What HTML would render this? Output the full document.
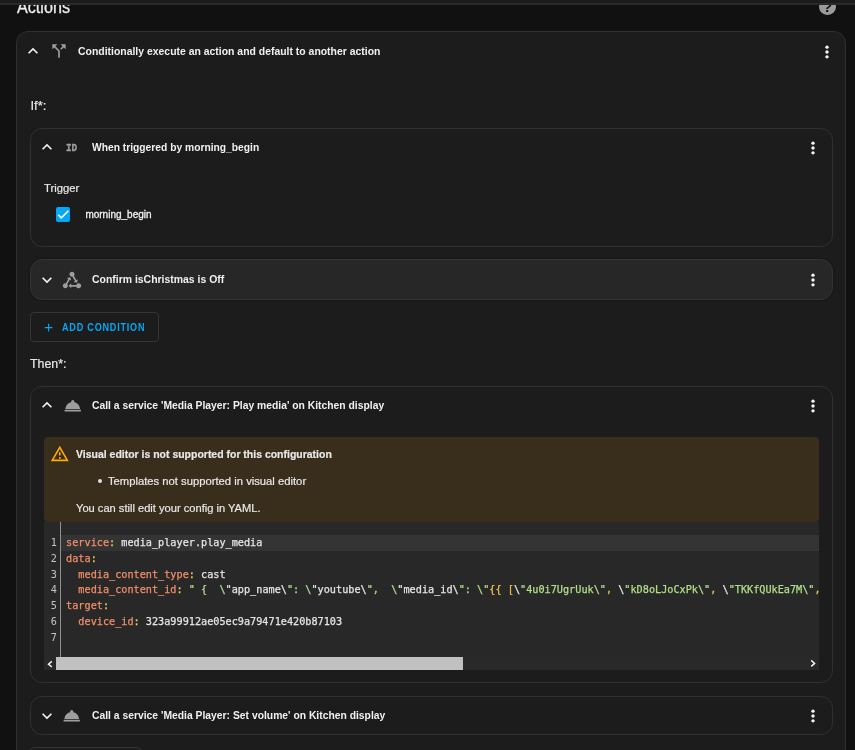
<!DOCTYPE html>
<html lang="en">
<head>
<meta charset="utf-8">
<title>Actions</title>
<style>
*{box-sizing:border-box;margin:0;padding:0}
html,body{width:855px;height:750px;overflow:hidden;background:#111111}
body{position:relative;font-family:"Liberation Sans",Arial,sans-serif;color:#e1e1e1}
.topbar{position:absolute;left:0;top:0;width:855px;height:5px;background:#1c1c1c;border-bottom:2px solid #2a2a2a;z-index:5}
.clip{position:absolute;left:0;top:5px;width:855px;height:745px;overflow:hidden}
.page{position:absolute;left:0;top:-5px;width:855px;height:750px;will-change:transform}
.h1{position:absolute;font-size:17.5px;line-height:20px;color:#ececec;white-space:nowrap;-webkit-text-stroke:.3px}
.help{position:absolute;width:16.6px;height:16.6px;border-radius:50%;background:#9b9b9b}
.help span{position:absolute;left:0;top:.5px;width:16.6px;color:#111;font-weight:bold;font-size:15.5px;line-height:16.6px;text-align:center}
.card{position:absolute;background:#1c1c1c;border:1px solid #303030;border-radius:12px}
.card.hov{background:#272727;border-color:#333}
.title{position:absolute;font-weight:bold;line-height:16px;white-space:nowrap;color:#f0f0f0}
.lbl{position:absolute;line-height:16px;white-space:nowrap;color:#e8e8e8;-webkit-text-stroke:.2px}
.sx{display:inline-block;transform-origin:0 50%;white-space:nowrap}
svg{position:absolute;display:block;overflow:visible}
.ic{fill:#9e9e9e}
.wh{fill:#f4f4f4}
.or{fill:#ffab00}
.bl{fill:#03a9f4}
.idic{position:absolute;font-family:"Liberation Mono",monospace;font-weight:bold;color:#9e9e9e;white-space:nowrap;line-height:16px}
.btn{position:absolute;border:1px solid #353535;border-radius:4px}
.btnt{position:absolute;color:#03a9f4;font-weight:bold;white-space:nowrap;line-height:16px}
.chk{position:absolute;border-radius:2px;background:#03a9f4}
.alert{position:absolute;background:#392e1c;border-radius:4px}
.code{position:absolute;background:#282828;overflow:hidden}
.code pre{position:absolute;font-family:"DejaVu Sans Mono","Liberation Mono",monospace;font-size:10.2px;line-height:16px;white-space:pre;color:#e4e4e4;-webkit-text-stroke:.25px}
.code .ln{color:#c4c4c4;text-align:right;-webkit-text-stroke:0}
.k{color:#f08d68}.s{color:#b3de8a}.p{color:#e8d25a}.b{color:#f0c050}
</style>
</head>
<body>
<div class="topbar"></div>
<div class="clip"><div class="page">

<div class="h1" style="left:17px;top:-3.4px"><span class="sx" style="transform:scaleX(.923)">Actions</span></div>
<div class="help" style="left:819.1px;top:-2px"><span>?</span></div>
<div class="card" style="left:16px;top:31px;width:830px;height:800px"></div>
<svg class="wh" style="left:23px;top:41.3px" width="20" height="20" viewBox="0 0 24 24"><path d="M7.41,15.41L12,10.83L16.59,15.41L18,14L12,8L6,14L7.41,15.41Z"/></svg>
<svg class="ic" style="left:48.7px;top:41.3px" width="20" height="20" viewBox="0 0 24 24"><path d="M14,4L16.29,6.29L13.41,9.17L14.83,10.59L17.71,7.71L20,10V4M10,4H4V10L6.29,7.71L11,12.41V20H13V11.59L7.71,6.29"/></svg>
<div class="title" style="left:78px;top:43.08px;font-size:11.3px"><span class="sx" style="transform:scaleX(0.923)">Conditionally execute an action and default to another action</span></div>
<svg class="wh" style="left:822.8px;top:42.65px" width="8" height="18" viewBox="0 0 8 18"><circle cx="4" cy="4.15" r="1.7"/><circle cx="4" cy="9" r="1.7"/><circle cx="4" cy="13.85" r="1.7"/></svg>
<div class="lbl" style="left:30.5px;top:97.90px;font-size:13px;"><span class="sx" style="transform:scaleX(1)">If*:</span></div>
<div class="card" style="left:30px;top:128px;width:803px;height:119px"></div>
<svg class="wh" style="left:37.2px;top:137.3px" width="20" height="20" viewBox="0 0 24 24"><path d="M7.41,15.41L12,10.83L16.59,15.41L18,14L12,8L6,14L7.41,15.41Z"/></svg>
<div class="idic" style="left:66.3px;top:139.9px;font-size:10.8px;-webkit-text-stroke:.35px"><span class="sx" style="transform:scaleX(.86)">ID</span></div>
<div class="title" style="left:91.85px;top:139.28px;font-size:11.3px"><span class="sx" style="transform:scaleX(0.909)">When triggered by morning_begin</span></div>
<svg class="wh" style="left:808.8px;top:139.15px" width="8" height="18" viewBox="0 0 8 18"><circle cx="4" cy="4.15" r="1.7"/><circle cx="4" cy="9" r="1.7"/><circle cx="4" cy="13.85" r="1.7"/></svg>
<div class="lbl" style="left:44px;top:179.58px;font-size:11.3px;"><span class="sx" style="transform:scaleX(1)">Trigger</span></div>
<div class="chk" style="left:55.8px;top:207.3px;width:14.4px;height:14.4px"><svg style="left:0;top:0" width="14.4" height="14.4" viewBox="0 0 24 24"><path d="M1.73,12.91 8.1,19.28 22.79,4.59" fill="none" stroke="#fff" stroke-width="3.12" transform="translate(2.3 2.5) scale(.81)"/></svg></div>
<div class="lbl" style="left:85.4px;top:207.23px;font-size:10px;-webkit-text-stroke:.3px;color:#f0f0f0"><span class="sx" style="transform:scaleX(1)">morning_begin</span></div>
<div class="card hov" style="left:30px;top:259.3px;width:803px;height:40.3px;box-shadow:0 0 2px rgba(0,0,0,.5)"></div>
<svg class="wh" style="left:37.3px;top:269.9px" width="20" height="20" viewBox="0 0 24 24"><path d="M7.41,8.58L12,13.17L16.59,8.58L18,10L12,16L6,10L7.41,8.58Z"/></svg>
<svg class="ic" style="left:62.2px;top:269.9px" width="20" height="20" viewBox="0 0 24 24"><path d="M6.27 17.05C6.72 17.58 7 18.25 7 19C7 20.66 5.66 22 4 22S1 20.66 1 19 2.34 16 4 16C4.18 16 4.36 16 4.53 16.05L7.6 10.69L5.86 9.7L9.95 8.58L11.07 12.67L9.33 11.68L6.27 17.05M20 16C18.7 16 17.6 16.84 17.18 18H11V16L8 19L11 22V20H17.18C17.6 21.16 18.7 22 20 22C21.66 22 23 20.66 23 19S21.66 16 20 16M12 8C12.18 8 12.36 8 12.53 7.95L15.6 13.31L13.86 14.3L17.95 15.42L19.07 11.33L17.33 12.32L14.27 6.95C14.72 6.42 15 5.75 15 5C15 3.34 13.66 2 12 2S9 3.34 9 5 10.34 8 12 8Z"/></svg>
<div class="title" style="left:91.85px;top:270.88px;font-size:11.3px"><span class="sx" style="transform:scaleX(0.924)">Confirm isChristmas is Off</span></div>
<svg class="wh" style="left:808.8px;top:271.25px" width="8" height="18" viewBox="0 0 8 18"><circle cx="4" cy="4.15" r="1.7"/><circle cx="4" cy="9" r="1.7"/><circle cx="4" cy="13.85" r="1.7"/></svg>
<div class="btn" style="left:30px;top:312px;width:129px;height:29.5px"></div>
<svg class="bl" style="left:42.4px;top:320.6px" width="13.2" height="13.2" viewBox="0 0 24 24"><path d="M19,13H13V19H11V13H5V11H11V5H13V11H19V13Z"/></svg>
<div class="btnt" style="left:61.9px;top:319.5px;font-size:10.3px;letter-spacing:.9px"><span class="sx" style="transform:scaleX(.88)">ADD CONDITION</span></div>
<div class="lbl" style="left:30.2px;top:356.40px;font-size:13px;"><span class="sx" style="transform:scaleX(0.95)">Then*:</span></div>
<div class="card" style="left:30px;top:386px;width:803px;height:296.8px"></div>
<svg class="wh" style="left:36.8px;top:394.9px" width="20" height="20" viewBox="0 0 24 24"><path d="M7.41,15.41L12,10.83L16.59,15.41L18,14L12,8L6,14L7.41,15.41Z"/></svg>
<svg class="ic" style="left:62.5px;top:395.7px" width="19.5" height="19.5" viewBox="0 0 24 24"><path d="M2,17H22V19H2M13.84,7.79C13.94,7.55 14,7.28 14,7A2,2 0 0,0 12,5A2,2 0 0,0 10,7C10,7.28 10.06,7.55 10.16,7.79C6.25,8.6 3.27,11.93 3,16H21C20.73,11.93 17.75,8.6 13.84,7.79Z"/></svg>
<div class="title" style="left:91.85px;top:396.98px;font-size:11.3px"><span class="sx" style="transform:scaleX(0.915)">Call a service 'Media Player: Play media' on Kitchen display</span></div>
<svg class="wh" style="left:808.8px;top:396.85px" width="8" height="18" viewBox="0 0 8 18"><circle cx="4" cy="4.15" r="1.7"/><circle cx="4" cy="9" r="1.7"/><circle cx="4" cy="13.85" r="1.7"/></svg>
<div class="alert" style="left:44px;top:437px;width:775.3px;height:85px"></div>
<svg class="or" style="left:49.9px;top:444.1px" width="19.6" height="19.6" viewBox="0 0 24 24"><path d="M12,2L1,21H23M12,6L19.53,19H4.47M11,10V14H13V10M11,16V18H13V16"/></svg>
<div class="lbl" style="left:76px;top:446.05px;font-size:11.7px;"><span class="sx" style="transform:scaleX(0.896)"><b>Visual editor is not supported for this configuration</b></span></div>
<div class="abs" style="position:absolute;left:97.7px;top:479px;width:4px;height:4px;border-radius:50%;background:#e1e1e1"></div>
<div class="lbl" style="left:108.4px;top:472.85px;font-size:11.7px;"><span class="sx" style="transform:scaleX(0.962)">Templates not supported in visual editor</span></div>
<div class="lbl" style="left:76px;top:499.75px;font-size:11.7px;"><span class="sx" style="transform:scaleX(0.951)">You can still edit your config in YAML.</span></div>
<div class="code" style="left:44px;top:522px;width:775.3px;height:148px">
<div style="position:absolute;left:16px;top:0;width:1px;height:135.2px;background:#909090"></div>
<div style="position:absolute;left:17px;top:13px;width:760px;height:15.6px;background:#343434"></div>
<pre class="ln" style="left:0;top:13.0px;width:13px">1</pre><pre style="left:22.1px;top:13.0px"><span class="k">service</span><span class="p">:</span> media_player.play_media</pre>
<pre class="ln" style="left:0;top:29.0px;width:13px">2</pre><pre style="left:22.1px;top:29.0px"><span class="k">data</span><span class="p">:</span></pre>
<pre class="ln" style="left:0;top:45.0px;width:13px">3</pre><pre style="left:22.1px;top:45.0px"><span class="k">  media_content_type</span><span class="p">:</span> cast</pre>
<pre class="ln" style="left:0;top:60.0px;width:13px">4</pre><pre style="left:22.1px;top:60.0px"><span class="k">  media_content_id</span><span class="p">:</span><span class="s"> " {  \</span>"app_name\<span class="s">": \</span>"youtube\<span class="s">",  \</span>"media_id\<span class="s">": \"</span><span class="b">{{ [</span>\<span class="s">"4u0i7UgrUuk\"</span><span class="b">,</span> \<span class="s">"kD8oLJoCxPk\"</span><span class="b">,</span> \<span class="s">"TKKfQUkEa7M\"</span><span class="b">,</span> \<span class="s">"p9pvAo5kZGs\"</span><span class="b">]</span></pre>
<pre class="ln" style="left:0;top:76.0px;width:13px">5</pre><pre style="left:22.1px;top:76.0px"><span class="k">target</span><span class="p">:</span></pre>
<pre class="ln" style="left:0;top:92.0px;width:13px">6</pre><pre style="left:22.1px;top:92.0px"><span class="k">  device_id</span><span class="p">:</span> 323a99912ae05ec9a79471e420b87103</pre>
<pre class="ln" style="left:0;top:108.0px;width:13px">7</pre><pre style="left:22.1px;top:108.0px"> </pre>
<div style="position:absolute;left:0;top:135.2px;width:775.3px;height:12.8px;background:#292929"></div>
<div style="position:absolute;left:11.9px;top:135.2px;width:406.9px;height:12.5px;background:#c1c1c1"></div>
<svg style="left:2.5px;top:138.6px" width="6" height="6.4" viewBox="0 0 6 6.4"><path d="M4.8,0.4 1.5,3.2 4.8,6" fill="none" stroke="#f0f0f0" stroke-width="1.5"/></svg>
<svg style="left:765.7px;top:138.4px" width="6" height="6.8" viewBox="0 0 6 6.8"><path d="M1.2,0.4 4.6,3.4 1.2,6.4" fill="none" stroke="#f0f0f0" stroke-width="1.5"/></svg>
</div>
<div class="card" style="left:30px;top:696px;width:803px;height:39px"></div>
<svg class="wh" style="left:37.2px;top:705.9px" width="20" height="20" viewBox="0 0 24 24"><path d="M7.41,8.58L12,13.17L16.59,8.58L18,10L12,16L6,10L7.41,8.58Z"/></svg>
<svg class="ic" style="left:61.9px;top:706.1px" width="19.5" height="19.5" viewBox="0 0 24 24"><path d="M2,17H22V19H2M13.84,7.79C13.94,7.55 14,7.28 14,7A2,2 0 0,0 12,5A2,2 0 0,0 10,7C10,7.28 10.06,7.55 10.16,7.79C6.25,8.6 3.27,11.93 3,16H21C20.73,11.93 17.75,8.6 13.84,7.79Z"/></svg>
<div class="title" style="left:91.85px;top:707.28px;font-size:11.3px"><span class="sx" style="transform:scaleX(0.915)">Call a service 'Media Player: Set volume' on Kitchen display</span></div>
<svg class="wh" style="left:808.8px;top:707.25px" width="8" height="18" viewBox="0 0 8 18"><circle cx="4" cy="4.15" r="1.7"/><circle cx="4" cy="9" r="1.7"/><circle cx="4" cy="13.85" r="1.7"/></svg>
<div class="btn" style="left:30px;top:747.4px;width:110.5px;height:29.5px"></div>
</div></div>
</body>
</html>
